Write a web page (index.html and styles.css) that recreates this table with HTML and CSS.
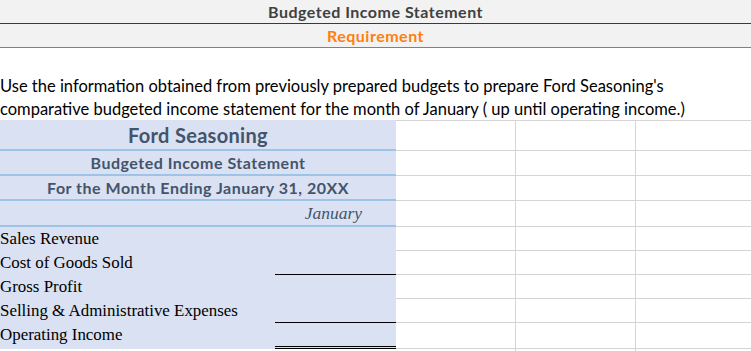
FILE: index.html
```html
<!DOCTYPE html>
<html>
<head>
<meta charset="utf-8">
<link rel="stylesheet" href="styles.css">
</head>
<body>
<div class="banner banner-title">Budgeted Income Statement</div>
<div class="banner banner-req">Requirement</div>
<p class="intro">Use the information obtained from previously prepared budgets to prepare Ford Seasoning's<br>comparative budgeted income statement for the month of January ( up until operating income.)</p>
<div class="sheet">
  <div class="cell head head-co">Ford Seasoning</div>
  <div class="cell grid top"></div><div class="cell grid top"></div><div class="cell grid top last"></div>

  <div class="cell head head-sub">Budgeted Income Statement</div>
  <div class="cell grid"></div><div class="cell grid"></div><div class="cell grid last"></div>

  <div class="cell head head-sub">For the Month Ending January 31, 20XX</div>
  <div class="cell grid"></div><div class="cell grid"></div><div class="cell grid last"></div>

  <div class="cell head head-month">January</div>
  <div class="cell grid"></div><div class="cell grid"></div><div class="cell grid last"></div>

  <div class="cell label">Sales Revenue</div><div class="cell amount"></div>
  <div class="cell grid"></div><div class="cell grid"></div><div class="cell grid last"></div>

  <div class="cell label">Cost of Goods Sold</div><div class="cell amount single"></div>
  <div class="cell grid"></div><div class="cell grid"></div><div class="cell grid last"></div>

  <div class="cell label">Gross Profit</div><div class="cell amount"></div>
  <div class="cell grid"></div><div class="cell grid"></div><div class="cell grid last"></div>

  <div class="cell label">Selling &amp; Administrative Expenses</div><div class="cell amount single"></div>
  <div class="cell grid"></div><div class="cell grid"></div><div class="cell grid last"></div>

  <div class="cell label">Operating Income</div><div class="cell amount double"></div>
  <div class="cell grid"></div><div class="cell grid"></div><div class="cell grid last"></div>

  <div class="cell tail"></div><div class="cell tail"></div>
  <div class="cell grid open"></div><div class="cell grid open"></div><div class="cell grid open last"></div>
</div>
</body>
</html>
```
FILE: styles.css
```css
* { box-sizing: border-box; }
html, body { margin: 0; padding: 0; background: #ffffff; }
body { width: 751px; height: 351px; overflow: hidden; font-family: Lato, "Open Sans", sans-serif; }

.banner {
  height: 24px;
  background: #f2f2f2;
  text-align: center;
  font-weight: 700;
  font-size: 16px;
  letter-spacing: 0.5px;
  line-height: 23px;
}
.banner-title { color: #404040; border-bottom: 1px solid #3a3a3a; }
.banner-req { color: #ff7f0e; border-bottom: 1px solid #808080; }

.intro {
  margin: 0;
  height: 72px;
  padding-top: 27px;
  font-size: 16.5px;
  line-height: 22.5px;
  color: #000;
  white-space: nowrap;
}

.sheet {
  display: grid;
  grid-template-columns: 275px 121px 120px 120px 115px;
  grid-template-rows: 31px 25px 25px 26px 24px 24px 24px 24px 26px 1fr;
  height: 231px;
}
.cell { min-width: 0; }

.grid { border-right: 1px solid #d4d4d4; border-bottom: 1px solid #d4d4d4; }
.grid.top { border-top: 1px solid #d4d4d4; }
.grid.last { border-right: none; }
.grid.open { border-bottom: none; }

.head {
  grid-column: 1 / 3;
  background: #d9e1f2;
  border-bottom: 2px solid #9dc3e6;
  text-align: center;
  font-weight: 700;
  color: #44546a;
  white-space: nowrap;
}
.head-co { font-size: 20px; letter-spacing: 0.3px; line-height: 30px; }
.head-sub { font-size: 16px; letter-spacing: 0.5px; line-height: 23px; }
.head-month {
  text-align: right;
  padding-right: 34px;
  font-family: "Liberation Serif", serif;
  font-style: italic;
  font-weight: 400;
  font-size: 17.5px;
  letter-spacing: 0;
  line-height: 24px;
}

.label {
  background: #d9e1f2;
  font-family: "Liberation Serif", serif;
  font-size: 16.9px;
  line-height: 24px;
  color: #000;
  white-space: nowrap;
}
.amount { background: #d9e1f2; }
.amount.single { border-bottom: 1px solid #000; }
.amount.double { border-bottom: 3px double #000; }
.tail { background: transparent; }
```
